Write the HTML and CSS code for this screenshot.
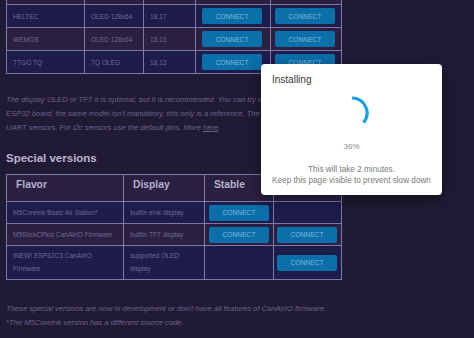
FILE: index.html
```html
<!DOCTYPE html>
<html>
<head>
<meta charset="utf-8">
<link rel="stylesheet" href="styles.css">
</head>
<body>
<main class="page">
  <div class="scrolled">
    <table class="boards">
      <colgroup><col class="c1"><col class="c2"><col class="c3"><col class="c4"><col class="c5"></colgroup>
      <tr class="alt"><td></td><td></td><td></td><td></td><td></td></tr>
      <tr><td>HELTEC</td><td>OLED 128x64</td><td>18,17</td><td><button class="btn">Connect</button></td><td><button class="btn">Connect</button></td></tr>
      <tr class="alt"><td>WEMOS</td><td>OLED 128x64</td><td>15,13</td><td><button class="btn">Connect</button></td><td><button class="btn">Connect</button></td></tr>
      <tr><td>TTGO TQ</td><td>TQ OLED</td><td>18,13</td><td><button class="btn">Connect</button></td><td><button class="btn">Connect</button></td></tr>
    </table>
  </div>

  <p class="note">The display OLED or TFT it is optional, but it is recommended. You can try with any<br>ESP32 board, the same model isn't mandatory, this only is a reference. The pins are<br>UART sensors. For i2c sensors use the default pins. More <a class="link" href="#">here</a>.</p>

  <h2 class="heading">Special versions</h2>

  <table class="special">
    <colgroup><col class="s1"><col class="s2"><col class="s3"><col class="s4"></colgroup>
    <tr class="alt head"><th>Flavor</th><th>Display</th><th>Stable</th><th></th></tr>
    <tr><td>M5CoreInk Basic Air Station*</td><td>builtin eink display</td><td><button class="btn">Connect</button></td><td></td></tr>
    <tr class="alt"><td>M5StickCPlus CanAirIO Firmware</td><td>builtin TFT display</td><td><button class="btn">Connect</button></td><td><button class="btn">Connect</button></td></tr>
    <tr class="tall"><td>!NEW! ESP32C3 CanAirIO Firmware</td><td>supported OLED display</td><td></td><td><button class="btn">Connect</button></td></tr>
  </table>

  <p class="note foot">These special versions are now in development or don't have all features of CanAirIO firmware.<br>*The M5CoreInk version has a different source code.</p>
</main>

<div class="dialog">
  <div class="title">Installing</div>
  <svg class="spinner" width="36" height="36" viewBox="0 0 36 36">
    <path d="M18 3 A15 15 0 0 1 29.49 27.64" fill="none" stroke="#19a0e6" stroke-width="3.2"/>
  </svg>
  <div class="pct">36%</div>
  <div class="msg">This will take 2 minutes.<br>Keep this page visible to prevent slow down</div>
</div>
</body>
</html>
```

FILE: styles.css
```css
html, body {
  margin: 0;
  padding: 0;
  background: #211a35;
  overflow: hidden;
}
body {
  width: 474px;
  height: 338px;
  font-family: "Liberation Sans", Arial, sans-serif;
  position: relative;
}
.page {
  padding: 0 6px;
}
.scrolled {
  margin-top: -19px;
}
table {
  border-collapse: collapse;
  table-layout: fixed;
  border: 1px solid #7f78a2;
}
td, th {
  border: 1px solid #7f78a2;
  padding: 0 6px;
  font-size: 6.6px;
  color: #6e6a93;
  text-align: left;
  background: #1d1c4a;
}
tr.alt td, tr.alt th {
  background: #2a2042;
}
.boards { width: 335px; }
.boards td { height: 22px; }
.boards col.c1 { width: 78px; }
.boards col.c2 { width: 59px; }
.boards col.c3 { width: 52px; }
.boards col.c4 { width: 75px; }
.boards col.c5 { width: 71px; }

.btn {
  display: block;
  width: 60px;
  height: 16px;
  border: 0;
  border-radius: 2px;
  background: #0b6fa9;
  color: #7fb9dc;
  font-family: "Liberation Sans", Arial, sans-serif;
  font-size: 6.7px;
  text-transform: uppercase;
  padding: 0;
  margin: 0;
}
.boards td:nth-child(5) .btn { margin-left: -2px; }

.note {
  margin: 19px 0 0;
  font-size: 7.6px;
  line-height: 14px;
  font-style: italic;
  color: #6a6289;
  white-space: nowrap;
}
.link { color: #6a6289; text-decoration: underline; }

.heading {
  margin: 16px 0 9px;
  font-size: 11.5px;
  line-height: 14px;
  font-weight: bold;
  color: #bcb5d0;
}

.special { width: 335px; }
.special col.s1 { width: 117px; }
.special col.s2 { width: 81px; }
.special col.s3 { width: 69px; }
.special col.s4 { width: 68px; }
.special th {
  font-size: 10.3px;
  font-weight: bold;
  color: #b7b1cc;
  height: 18px;
  padding: 0 9px 8px;
  vertical-align: middle;
}
.special td { height: 21px; }
.special td:nth-child(3) .btn { margin-left: -2px; }
.special td:nth-child(4) .btn { margin-left: -3px; }
.special tr.tall td { height: 33px; line-height: 12.3px; }
.special tr.tall td:first-child, .special tr.tall td:nth-child(2) { padding-right: 20px; }

.foot { margin-top: 22px; }

.dialog {
  position: absolute;
  left: 261px;
  top: 64px;
  width: 181px;
  height: 131px;
  background: #fff;
  border-radius: 4px;
  box-shadow: 0 4px 14px rgba(0,0,0,0.45);
  box-sizing: border-box;
  padding: 10px 11px 0;
  display: flex;
  flex-direction: column;
  align-items: center;
}
.title {
  align-self: flex-start;
  font-size: 10px;
  line-height: 12px;
  color: #3a3a3a;
}
.spinner {
  margin-top: 9px;
  display: block;
}
.pct {
  margin-top: 11px;
  font-size: 8px;
  line-height: 10px;
  color: #8a8a8a;
}
.msg {
  margin-top: 12px;
  font-size: 8.2px;
  line-height: 11px;
  color: #7a7a7a;
  text-align: center;
  white-space: nowrap;
}
```
